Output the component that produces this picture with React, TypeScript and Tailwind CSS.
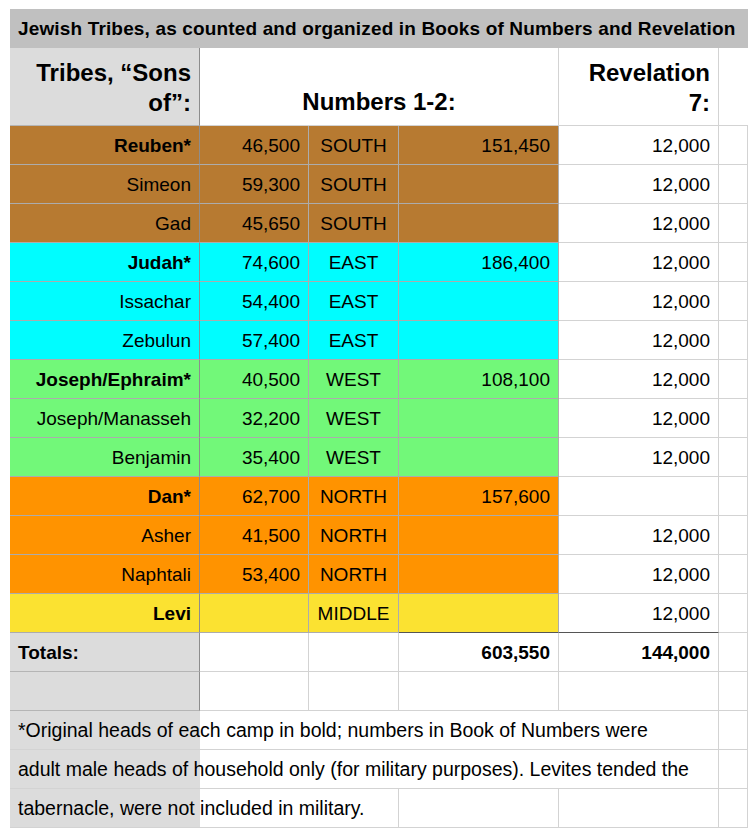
import React from 'react';

// Jewish tribes spreadsheet — Numbers 1-2 vs Revelation 7

type Tribe = {
  name: string;
  bold?: boolean;
  count: string;
  camp: string;
  total: string;
  rev: string;
};

type Group = { bg: string; tribes: Tribe[] };

const groups: Group[] = [
  {
    bg: 'bg-[#b77a31]',
    tribes: [
      { name: 'Reuben*', bold: true, count: '46,500', camp: 'SOUTH', total: '151,450', rev: '12,000' },
      { name: 'Simeon', count: '59,300', camp: 'SOUTH', total: '', rev: '12,000' },
      { name: 'Gad', count: '45,650', camp: 'SOUTH', total: '', rev: '12,000' },
    ],
  },
  {
    bg: 'bg-[#00fdff]',
    tribes: [
      { name: 'Judah*', bold: true, count: '74,600', camp: 'EAST', total: '186,400', rev: '12,000' },
      { name: 'Issachar', count: '54,400', camp: 'EAST', total: '', rev: '12,000' },
      { name: 'Zebulun', count: '57,400', camp: 'EAST', total: '', rev: '12,000' },
    ],
  },
  {
    bg: 'bg-[#72f879]',
    tribes: [
      { name: 'Joseph/Ephraim*', bold: true, count: '40,500', camp: 'WEST', total: '108,100', rev: '12,000' },
      { name: 'Joseph/Manasseh', count: '32,200', camp: 'WEST', total: '', rev: '12,000' },
      { name: 'Benjamin', count: '35,400', camp: 'WEST', total: '', rev: '12,000' },
    ],
  },
  {
    bg: 'bg-[#ff9300]',
    tribes: [
      { name: 'Dan*', bold: true, count: '62,700', camp: 'NORTH', total: '157,600', rev: '' },
      { name: 'Asher', count: '41,500', camp: 'NORTH', total: '', rev: '12,000' },
      { name: 'Naphtali', count: '53,400', camp: 'NORTH', total: '', rev: '12,000' },
    ],
  },
  {
    bg: 'bg-[#fbe231]',
    tribes: [{ name: 'Levi', bold: true, count: '', camp: 'MIDDLE', total: '', rev: '12,000' }],
  },
];

const gridCols = 'grid grid-cols-[190px_109px_90px_160px_160px_29px]';
const colored = 'h-[39px] pt-[2px] flex items-center border-r border-b border-[#acacac]';
const white = 'h-[39px] pt-[2px] flex items-center bg-white border-r border-b border-[#d3d3d3]';

const TribeRow: React.FC<{ t: Tribe; bg: string; last?: boolean }> = ({ t, bg, last }) => (
  <div className={gridCols}>
    <div className={`${colored} ${bg} justify-end pr-2 border-r-[#8d8d8d] ${t.bold ? 'font-bold' : ''}`}>
      {t.name}
    </div>
    <div className={`${colored} ${bg} justify-end pr-2`}>{t.count}</div>
    <div className={`${colored} ${bg} justify-center`}>{t.camp}</div>
    <div className={`${colored} ${bg} justify-end pr-2 ${last ? 'border-b-[#555]' : ''}`}>{t.total}</div>
    <div className={`${white} justify-end pr-2 ${last ? 'border-b-[#555]' : ''}`}>{t.rev}</div>
    <div className={white}></div>
  </div>
);

const noteBg = 'bg-[linear-gradient(to_right,#dcdcdc_190px,#ffffff_190px)]';
const noteCell = `h-[39px] pt-[2px] flex items-center pl-2 whitespace-nowrap text-[19.5px] border-r border-b border-[#d3d3d3] ${noteBg}`;

export default function App() {
  return (
    <div
      className="w-[748px] h-[830px] overflow-hidden bg-white pl-[10px] pt-[9px] text-[19px] text-black"
      style={{ fontFamily: '"Liberation Sans", Arial, sans-serif' }}
    >
      {/* Title bar */}
      <div className="h-[39px] pt-[2px] bg-[#c0c0c0] flex items-center pl-2 text-[19px] tracking-[0.15px] font-bold whitespace-nowrap">
        Jewish Tribes, as counted and organized in Books of Numbers and Revelation
      </div>

      {/* Header */}
      <div className={gridCols}>
        <div className="h-[78px] pt-[2px] bg-[#dcdcdc] border-r border-b border-r-[#8d8d8d] border-b-[#b5b5b5] flex items-center justify-end pr-2 text-right text-[24px] leading-[30px] font-bold">
          Tribes, “Sons
          <br />
          of”:
        </div>
        <div className="col-span-3 h-[78px] border-r border-b border-[#d3d3d3] flex items-end justify-center pb-[8px] text-[24px] leading-[30px] font-bold">
          Numbers 1-2:
        </div>
        <div className="h-[78px] pt-[2px] border-r border-b border-[#d3d3d3] flex items-center justify-end pr-2 text-right text-[24px] leading-[30px] font-bold">
          Revelation
          <br />
          7:
        </div>
        <div className="h-[78px] border-b border-[#d3d3d3]"></div>
      </div>

      {/* Tribes */}
      {groups.map((g) =>
        g.tribes.map((t) => (
          <TribeRow key={t.name} t={t} bg={g.bg} last={t.name === 'Levi'} />
        ))
      )}

      {/* Totals */}
      <div className={gridCols}>
        <div className="h-[39px] pt-[2px] flex items-center pl-2 bg-[#dcdcdc] border-r border-b border-r-[#8d8d8d] border-b-[#b5b5b5] font-bold">
          Totals:
        </div>
        <div className={white}></div>
        <div className={white}></div>
        <div className={`${white} justify-end pr-2 font-bold`}>603,550</div>
        <div className={`${white} justify-end pr-2 font-bold`}>144,000</div>
        <div className={white}></div>
      </div>
      <div className={gridCols}>
        <div className="h-[39px] bg-[#dcdcdc] border-r border-b border-r-[#8d8d8d] border-b-[#b5b5b5]"></div>
        <div className={white}></div>
        <div className={white}></div>
        <div className={white}></div>
        <div className={white}></div>
        <div className={white}></div>
      </div>

      {/* Footnote */}
      <div className={gridCols}>
        <div className={`col-span-5 ${noteCell}`}>
          *Original heads of each camp in bold; numbers in Book of Numbers were
        </div>
        <div className={white}></div>
      </div>
      <div className={gridCols}>
        <div className={`col-span-5 ${noteCell}`}>
          adult male heads of household only (for military purposes). Levites tended the
        </div>
        <div className={white}></div>
      </div>
      <div className={gridCols}>
        <div className={`col-span-3 ${noteCell}`}>
          tabernacle, were not included in military.
        </div>
        <div className={white}></div>
        <div className={white}></div>
        <div className={white}></div>
      </div>
    </div>
  );
}
